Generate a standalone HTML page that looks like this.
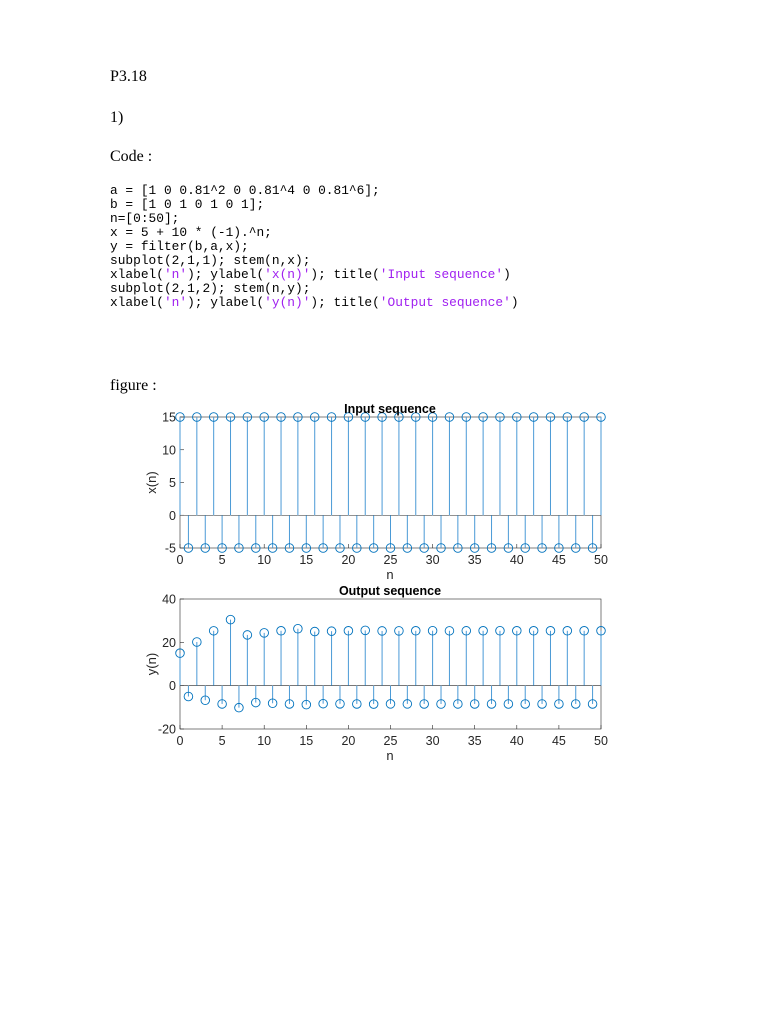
<!DOCTYPE html>
<html><head><meta charset="utf-8"><style>
body{margin:0;background:#fff;width:768px;height:1024px;position:relative;overflow:hidden}
.t{position:absolute;left:110px;font-family:"Liberation Serif",serif;font-size:16px;color:#000;white-space:pre;line-height:1}
pre{position:absolute;left:110px;top:184px;margin:0;font-family:"Liberation Mono",monospace;font-size:12.85px;line-height:14px;color:#000}
.s{color:#a020f0}
svg{position:absolute;left:0;top:0}
</style></head><body>
<div class="t" style="top:69px">P3.18</div>
<div class="t" style="top:110px">1)</div>
<div class="t" style="top:149px">Code :</div>
<pre>a = [1 0 0.81^2 0 0.81^4 0 0.81^6];
b = [1 0 1 0 1 0 1];
n=[0:50];
x = 5 + 10 * (-1).^n;
y = filter(b,a,x);
subplot(2,1,1); stem(n,x);
xlabel(<span class="s">'n'</span>); ylabel(<span class="s">'x(n)'</span>); title(<span class="s">'Input sequence'</span>)
subplot(2,1,2); stem(n,y);
xlabel(<span class="s">'n'</span>); ylabel(<span class="s">'y(n)'</span>); title(<span class="s">'Output sequence'</span>)</pre>
<div class="t" style="top:378px">figure :</div>
<svg id="g" width="768" height="1024" font-family="Liberation Sans, sans-serif"></svg>
<script>
var g=document.getElementById('g'),h='';
var x=[],y=[];for(var n=0;n<=50;n++)x.push(n%2?-5:15);
var b=[1,0,1,0,1,0,1],a=[1,0,Math.pow(.81,2),0,Math.pow(.81,4),0,Math.pow(.81,6)];
for(var n=0;n<=50;n++){var s=0;for(var k=0;k<7;k++){if(n-k>=0)s+=b[k]*x[n-k];if(k>0&&n-k>=0)s-=a[k]*y[n-k];}y.push(s);}
function plot(d,top,bot,ymin,ymax,ticks,title,yl){
 var L=180,R=601,sx=(R-L)/50,sy=(bot-top)/(ymax-ymin);
 function Y(v){return bot-(v-ymin)*sy}
 h+='<rect x="'+L+'" y="'+top+'" width="'+(R-L)+'" height="'+(bot-top)+'" fill="#fff" stroke="#262626" stroke-width="0.6"/>';
 for(var i=0;i<=10;i++){var xx=L+i*5*sx;h+='<line x1="'+xx+'" x2="'+xx+'" y1="'+bot+'" y2="'+(bot-4)+'" stroke="#262626" stroke-width="0.6"/><text x="'+xx+'" y="'+(bot+16)+'" font-size="12.5" text-anchor="middle" fill="#262626">'+(i*5)+'</text>';}
 ticks.forEach(function(t){var yy=Y(t);h+='<text x="'+(L-4)+'" y="'+(yy+4.5)+'" font-size="12.5" text-anchor="end" fill="#262626">'+t+'</text><line x1="'+L+'" x2="'+(L+4)+'" y1="'+yy+'" y2="'+yy+'" stroke="#262626" stroke-width="0.6"/>';});
 h+='<line x1="'+L+'" x2="'+R+'" y1="'+Y(0)+'" y2="'+Y(0)+'" stroke="#262626" stroke-width="0.6"/>';
 for(var n=0;n<=50;n++){var xx=L+n*sx;h+='<line x1="'+xx+'" x2="'+xx+'" y1="'+Y(0)+'" y2="'+Y(d[n])+'" stroke="#4a9ad6" stroke-width="1"/><circle cx="'+xx+'" cy="'+Y(d[n])+'" r="4.3" fill="none" stroke="#0072bd" stroke-width="0.9"/>';}
 h+='<text x="390" y="'+(top-4)+'" font-size="12.5" font-weight="bold" text-anchor="middle" fill="#000">'+title+'</text>';
 h+='<text x="390" y="'+(bot+31)+'" font-size="13" text-anchor="middle" fill="#262626">n</text>';
 var cy=(top+bot)/2;h+='<text transform="translate(156,'+cy+') rotate(-90)" font-size="13" text-anchor="middle" fill="#262626">'+yl+'</text>';
}
plot(x,417,548,-5,15,[15,10,5,0,-5],'Input sequence','x(n)');
plot(y,599,729,-20,40,[40,20,0,-20],'Output sequence','y(n)');
g.innerHTML=h;
</script>
</body></html>
